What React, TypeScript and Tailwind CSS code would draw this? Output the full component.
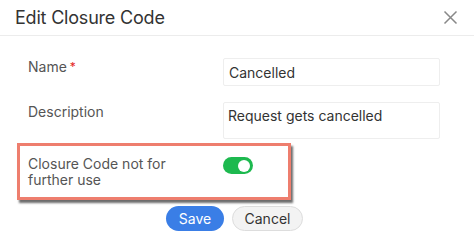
export default function App() {
  return (
    <div className="w-[474px] h-[248px] bg-white overflow-hidden font-['Inter',sans-serif] text-[#444]">
      {/* Header */}
      <header className="h-[36px] flex items-center justify-between pl-[15px] pr-[16px] border-b border-[#ececec]">
        <h1 className="text-[18px] text-[#333] tracking-[-0.2px]">Edit Closure Code</h1>
        <svg width="15" height="15" viewBox="0 0 15 15" className="text-[#888]">
          <path d="M1.5 1.5 13.5 13.5M13.5 1.5 1.5 13.5" stroke="currentColor" strokeWidth="1.5" />
        </svg>
      </header>

      <div className="pt-[22px]">
        {/* Name */}
        <div className="flex pl-[28px]">
          <label className="w-[195px] text-[14px] text-[#555] leading-[18px]">
            Name<span className="text-[#e42525] ml-[3px] align-top text-[12px]">*</span>
          </label>
          <div className="w-[217px] h-[28px] border border-[#eee] rounded-[2px] flex items-center px-[5px] text-[14px] text-[#333]">
            Cancelled
          </div>
        </div>

        {/* Description */}
        <div className="flex pl-[28px] mt-[16px]">
          <label className="w-[195px] text-[14px] text-[#555] pt-[1px] leading-[18px]">Description</label>
          <div className="w-[217px] h-[37px] border border-[#eee] rounded-[2px] px-[4px] pt-[4px] text-[14px] text-[#333] leading-[18px]">
            Request gets cancelled
          </div>
        </div>

        {/* Highlighted row */}
        <div className="ml-[17px] mt-[4px] w-[274px] h-[57px] border-[3px] border-[#ee7e6e] shadow-[2px_3px_2px_rgba(60,60,60,0.75)] flex items-start pt-[10px] pl-[8px]">
          <div className="w-[195px] text-[14px] text-[#555] leading-[16px]">
            <div>Closure Code not for</div>
            <div>further use</div>
          </div>
          <div className="w-[30px] h-[17px] mt-[1px] rounded-full bg-[#1db94f] flex items-center justify-end pr-[3px]">
            <div className="w-[12px] h-[12px] rounded-full bg-white" />
          </div>
        </div>

        {/* Buttons */}
        <div className="flex gap-[8px] pl-[166px] mt-[6px]">
          <button className="w-[58px] h-[25px] rounded-full bg-[#3a7ee6] text-white text-[14px]">Save</button>
          <button className="w-[71px] h-[25px] rounded-full bg-[#f3f3f3] border border-[#ddd] text-[#333] text-[14px]">
            Cancel
          </button>
        </div>
      </div>
    </div>
  );
}
